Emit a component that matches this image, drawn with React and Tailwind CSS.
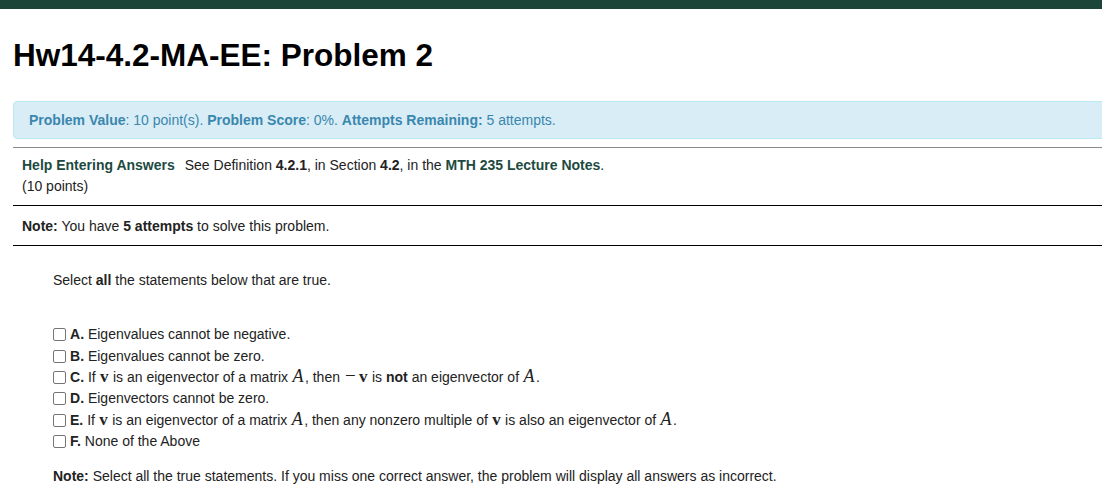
import React from "react";

const OPTIONS = [
  { key: "A", body: <>Eigenvalues cannot be negative.</> },
  { key: "B", body: <>Eigenvalues cannot be zero.</> },
  {
    key: "C",
    body: (
      <>
        If <V /> is an eigenvector of a matrix <MA />, then <span className="font-['Liberation_Serif',serif] text-[19px] leading-none ml-[1px] mr-[3px]">−</span><V /> is <b>not</b> an eigenvector of <MA />.
      </>
    ),
  },
  { key: "D", body: <>Eigenvectors cannot be zero.</> },
  {
    key: "E",
    body: (
      <>
        If <V /> is an eigenvector of a matrix <MA />, then any nonzero multiple of <V /> is also an eigenvector of <MA />.
      </>
    ),
  },
  { key: "F", body: <>None of the Above</> },
];

function V() {
  return <span className="font-['Liberation_Serif',serif] font-bold text-[17px] leading-none px-[0.5px]">v</span>;
}

function MA() {
  return <span className="font-['Liberation_Serif',serif] italic text-[18px] leading-none pl-[0.5px] pr-[1.5px]">A</span>;
}

export default function App() {
  return (
    <div className="w-full min-h-screen overflow-hidden bg-white text-[14px] text-[#222] font-['Liberation_Sans',Arial,sans-serif]">
      <div className="h-[9px] bg-[#1b4539]" />

      <div className="pl-[13px]">
        <h1 className="mt-[29px] text-[31.5px] leading-[35px] font-bold text-black">
          Hw14-4.2-MA-EE: Problem 2
        </h1>

        <div className="mt-[28px] mr-[-12px] h-[38px] flex items-center pl-[15px] bg-[#d9edf7] border border-[#bce8f1] rounded-[4px] text-[#3a87ad]">
          <span>
            <b>Problem Value</b>: 10 point(s). <b>Problem Score</b>: 0%. <b>Attempts Remaining:</b> 5 attempts.
          </span>
        </div>

        <div className="mt-[8px] mr-[-12px] border-t border-[#8a8a8a]" />

        <div className="pl-[9px] pt-[7px] pb-[8px] leading-[21px]">
          <div>
            <b className="text-[#1d4a3f]">Help Entering Answers</b>
            <span className="ml-[10px]">
              See Definition <b>4.2.1</b>, in Section <b>4.2</b>, in the <b className="text-[#1d4a3f]">MTH 235 Lecture Notes</b>.
            </span>
          </div>
          <div>(10 points)</div>
        </div>

        <div className="mr-[-12px] border-t border-black" />

        <div className="pl-[9px] pt-[10px] pb-[8px] leading-[21px]">
          <b>Note:</b> You have <b>5 attempts</b> to solve this problem.
        </div>

        <div className="mr-[-12px] border-t border-black" />

        <div className="pl-[40px]">
          <p className="mt-[24px] leading-[21px]">
            Select <b>all</b> the statements below that are true.
          </p>

          <div className="mt-[33px] flex flex-col">
            {OPTIONS.map((o) => (
              <label key={o.key} className="flex items-center h-[21.4px]">
                <span className="w-[13px] h-[13px] shrink-0 border border-[#767676] rounded-[2px] bg-white" />
                <span className="ml-[4px] whitespace-nowrap">
                  <b>{o.key}.</b> {o.body}
                </span>
              </label>
            ))}
          </div>

          <p className="mt-[14px] leading-[21px]">
            <b>Note:</b> Select all the true statements. If you miss one correct answer, the problem will display all answers as incorrect.
          </p>
        </div>
      </div>
    </div>
  );
}
